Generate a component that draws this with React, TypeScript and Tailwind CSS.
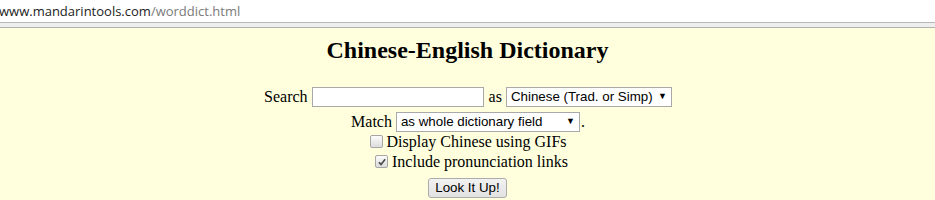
import React from "react";

type SelectBoxProps = {
  label: string;
  width: string;
};

function SelectBox({ label, width }: SelectBoxProps) {
  return (
    <div
      className={`relative flex h-[20px] items-center border border-[#a9a9a9] bg-white pl-[4px] text-[13.33px] leading-none text-black ${width}`}
      style={{ fontFamily: '"Liberation Sans", Arial, sans-serif' }}
    >
      <span className="whitespace-nowrap">{label}</span>
      <span className="absolute right-[4px] top-[4px] text-[9px] leading-none">▼</span>
    </div>
  );
}

function CheckBox({ checked }: { checked?: boolean }) {
  return (
    <span className="relative mr-[4px] inline-flex h-[13px] w-[13px] items-center justify-center rounded-[2px] border border-[#a6a6a6] bg-gradient-to-b from-[#fcfcfc] to-[#dcdcdc]">
      {checked ? (
        <svg viewBox="0 0 12 12" className="h-[10px] w-[10px]">
          <path d="M2.2 6.3 L4.8 8.9 L9.8 2.8" fill="none" stroke="#4a4a4a" strokeWidth="2" />
        </svg>
      ) : null}
    </span>
  );
}

export default function App() {
  return (
    <div className="h-[200px] w-[935px] overflow-hidden bg-[#ffffdd]">
      <div
        className="flex h-[22px] items-center bg-white text-[13px] leading-none"
        style={{ fontFamily: '"Open Sans", "Liberation Sans", sans-serif' }}
      >
        <span className="-ml-[1px] text-[#222]">www.mandarintools.com</span>
        <span className="text-[#7a7a7a]">/worddict.html</span>
      </div>
      <div className="h-[1px] bg-[#b8b8b8]" />
      <div className="h-[4px] bg-[#eeeeee]" />
      <div className="h-[1px] bg-[#b2b2b2]" />

      <div
        className="flex flex-col items-center text-[16px] text-black"
        style={{ fontFamily: '"Liberation Serif", "Times New Roman", serif' }}
      >
        <h2 className="mt-[8px] h-[28px] text-[24px] font-bold leading-[28px]">
          Chinese-English Dictionary
        </h2>

        <div className="mt-[23px] flex h-[20px] items-center pl-[1px]">
          <span className="mr-[4px]">Search</span>
          <div className="h-[20px] w-[172px] border border-[#a9a9a9] bg-white" />
          <span className="ml-[5px] mr-[4px]">as</span>
          <SelectBox label="Chinese (Trad. or Simp)" width="w-[166px]" />
        </div>

        <div className="mt-[5px] flex h-[19px] items-center pl-[1px]">
          <span className="mr-[4px]">Match</span>
          <SelectBox label="as whole dictionary field" width="w-[184px]" />
          <span className="ml-[1px]">.</span>
        </div>

        <div className="mt-[1px] flex h-[19px] items-center pl-[1px]">
          <CheckBox />
          <span>Display Chinese using GIFs</span>
        </div>

        <div className="mt-[1px] flex h-[19px] items-center pl-[8px]">
          <CheckBox checked />
          <span>Include pronunciation links</span>
        </div>

        <button
          type="button"
          className="mt-[7px] h-[20px] rounded-[3px] border border-[#acacac] bg-gradient-to-b from-[#f2f2f2] to-[#e2e2e2] px-[6px] text-[13.33px] leading-none text-black"
          style={{ fontFamily: '"Liberation Sans", Arial, sans-serif' }}
        >
          Look It Up!
        </button>
      </div>
    </div>
  );
}
